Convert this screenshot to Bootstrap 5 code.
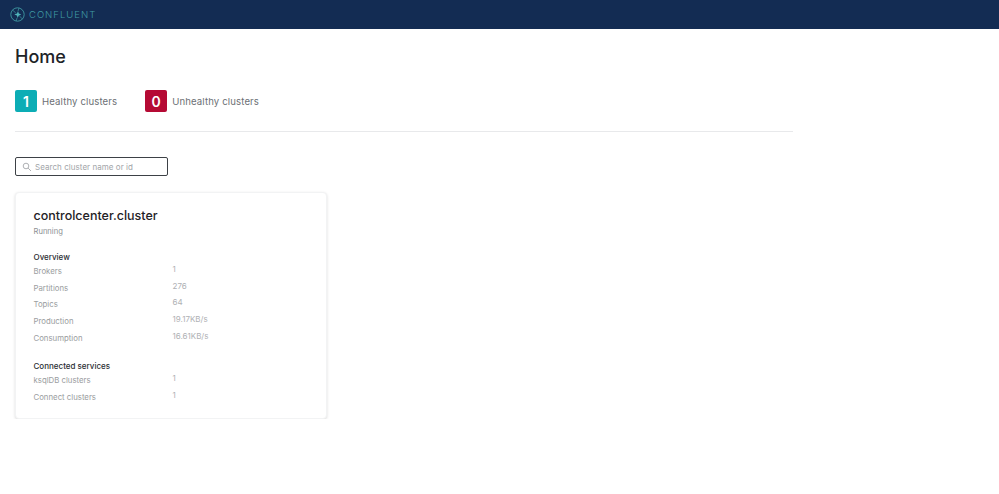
<!DOCTYPE html>
<html lang="en">
<head>
<meta charset="utf-8">
<title>Home</title>
<link rel="stylesheet" href="https://cdn.jsdelivr.net/npm/bootstrap@5.3.0/dist/css/bootstrap.min.css">
<style>
body{font-family:Inter,"Liberation Sans",sans-serif;background:#fff;color:#22252a;overflow:hidden}
.topbar{height:29px;background:#132c53;padding:0 10px;gap:4px}
.brand-word{font-size:9.5px;letter-spacing:1px;color:#3f9aa3;line-height:1;font-weight:300}
.page-body{padding:0 15px;width:808px}
.page-title{font-size:18px;font-weight:500;line-height:22px;margin:17px 0 0;color:#202327}
.stat-row{margin-top:22px;gap:28px;padding-bottom:19px;border-bottom:1px solid #e8e9eb}
.stat-box{width:22px;height:22px;border-radius:2px;color:#fff;font-size:14px;font-weight:600;margin-right:5px}
.stat-ok{background:#0cadb5}
.stat-bad{background:#b50a34}
.stat-text{font-size:9.6px;color:#6c7075;padding-top:2px;letter-spacing:.12px}
.search-box{width:153px;height:19px;margin-top:25px;border:1px solid #3d4146;border-radius:2px;padding:0 6px;gap:3px}
.search-box input{border:0;outline:0;padding:0;width:120px;font-size:8px;color:#888;background:transparent;letter-spacing:.05px}
.search-box input::placeholder{color:#a2a5a9;opacity:1}
.cluster-card{width:312px;height:227px;margin-top:16px;border:1px solid #f2f3f4;border-radius:4px;box-shadow:0 1px 3px rgba(0,0,0,.14);padding:14px 18px 0 17.5px;background:#fff}
.cluster-name{font-size:12.5px;font-weight:500;line-height:17px;margin:0;color:#1f2226}
.cluster-state{font-size:7.6px;line-height:10px;color:#8d9094;margin-top:3px}
.sect-title{font-size:8px;font-weight:500;line-height:10px;color:#2b2e33;margin-top:15px;margin-bottom:2px}
.sect-gap{margin-top:13.5px}
.kv{height:16.7px;font-size:7.8px;color:#9a9da0}
.kv-label{width:139px;padding-top:2px;line-height:10px}
.kv-val{line-height:10px;margin-top:-2px;padding-top:2px;color:#afb1b4;font-size:8px}
</style>
</head>
<body>
<nav class="topbar d-flex align-items-center">
<svg width="15" height="15" viewBox="0 0 15 15" fill="none" aria-hidden="true">
<circle cx="7.5" cy="7.5" r="6.7" stroke="#3f9aa3" stroke-width=".9"/>
<path d="M2.5 3L5.8 6M9.4 9L12.5 12M9 .9L8 4M7 11L6.2 14" stroke="#3f9aa3" stroke-width=".7"/>
<path d="M8 4L8.8 6.6L11.3 7.6L8.8 8.5L7.6 11L6.9 8.6L4.3 7.6L7 6.6Z" fill="#4fb3ba"/>
</svg>
<span class="brand-word">CONFLUENT</span>
</nav>
<main class="page-body">
<h1 class="page-title">Home</h1>
<div class="stat-row d-flex">
<div class="d-flex align-items-center"><span class="stat-box stat-ok d-flex align-items-center justify-content-center">1</span><span class="stat-text">Healthy clusters</span></div>
<div class="d-flex align-items-center"><span class="stat-box stat-bad d-flex align-items-center justify-content-center">0</span><span class="stat-text">Unhealthy clusters</span></div>
</div>
<div class="search-box d-flex align-items-center">
<svg width="10" height="10" viewBox="0 0 10 10" fill="none" aria-hidden="true"><circle cx="4" cy="4" r="2.8" stroke="#9a9da1" stroke-width=".8"/><path d="M6.1 6.1L9 9" stroke="#9a9da1" stroke-width=".8"/></svg>
<input type="text" placeholder="Search cluster name or id">
</div>
<section class="cluster-card">
<h2 class="cluster-name">controlcenter.cluster</h2>
<div class="cluster-state">Running</div>
<div class="sect-title">Overview</div>
<div class="kv d-flex"><span class="kv-label">Brokers</span><span class="kv-val">1</span></div>
<div class="kv d-flex"><span class="kv-label">Partitions</span><span class="kv-val">276</span></div>
<div class="kv d-flex"><span class="kv-label">Topics</span><span class="kv-val">64</span></div>
<div class="kv d-flex"><span class="kv-label">Production</span><span class="kv-val">19.17KB/s</span></div>
<div class="kv d-flex"><span class="kv-label">Consumption</span><span class="kv-val">16.61KB/s</span></div>
<div class="sect-title sect-gap">Connected services</div>
<div class="kv d-flex"><span class="kv-label">ksqlDB clusters</span><span class="kv-val">1</span></div>
<div class="kv d-flex"><span class="kv-label">Connect clusters</span><span class="kv-val">1</span></div>
</section>
</main>
<script src="https://cdn.jsdelivr.net/npm/bootstrap@5.3.0/dist/js/bootstrap.bundle.min.js"></script>
</body>
</html>
